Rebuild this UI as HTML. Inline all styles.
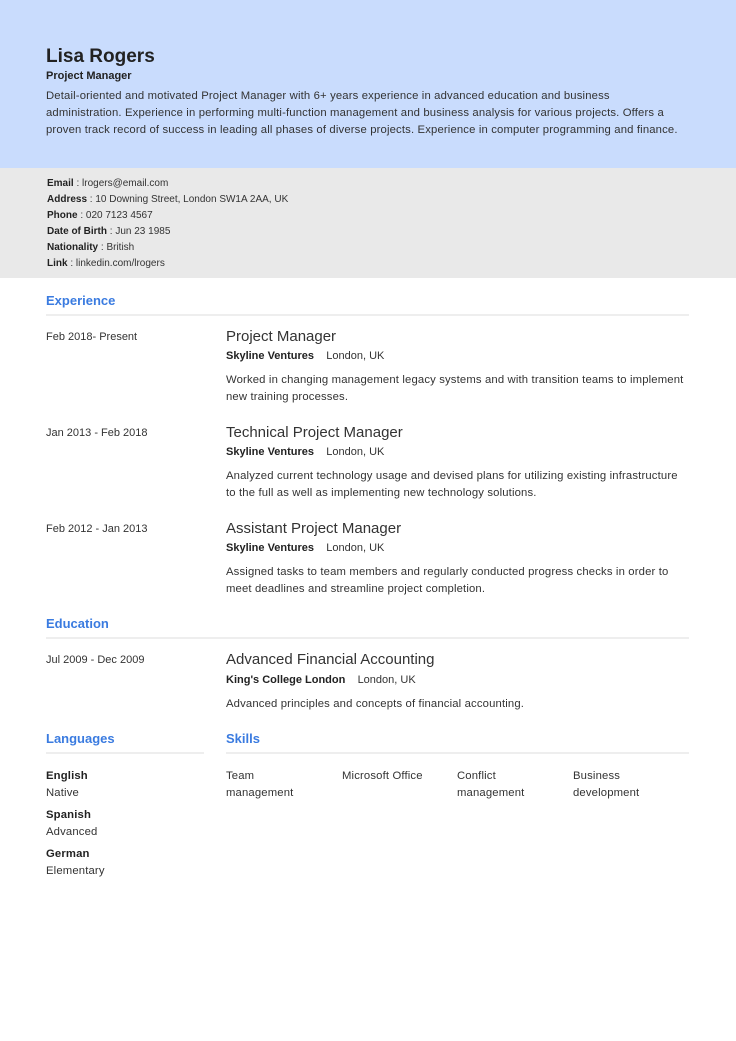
<!DOCTYPE html><html><head><style>
body{margin:0;width:736px;height:1041px;background:#fff;font-family:"Liberation Sans",sans-serif;color:#333;position:relative;overflow:hidden}
.a{position:absolute;white-space:nowrap}
.hd{position:absolute;left:0;top:0;width:736px;height:168px;background:#c9dcfd}
.gr{position:absolute;left:0;top:168px;width:736px;height:110px;background:#e9e9e9}
.sec{position:absolute;color:#3a7be0;font-weight:bold;font-size:13px}
.ln{position:absolute;height:2px;background:#eeeeee}
.d{font-size:11px;color:#333}
.t{font-size:15px;color:#333}
.c{font-size:11px}
.c b{color:#222}
.p{font-size:11.3px;line-height:17px;letter-spacing:0.15px}
.ct{font-size:10px;line-height:16px;color:#333}
.ct b{color:#222}
</style></head><body>
<div class="hd"></div><div class="gr"></div>
<div class="a" style="left:46px;top:46px;font-size:19px;font-weight:bold;color:#222">Lisa Rogers</div>
<div class="a" style="left:46px;top:70px;font-size:11px;font-weight:bold;color:#222">Project Manager</div>
<div class="a p" style="left:46px;top:88px;color:#333">Detail-oriented and motivated Project Manager with 6+ years experience in advanced education and business<br>administration. Experience in performing multi-function management and business analysis for various projects. Offers a<br>proven track record of success in leading all phases of diverse projects. Experience in computer programming and finance.</div>
<div class="a ct" style="left:47px;top:176px"><b>Email</b> : lrogers@email.com<br><b>Address</b> : 10 Downing Street, London SW1A 2AA, UK<br><b>Phone</b> : 020 7123 4567<br><b>Date of Birth</b> : Jun 23 1985<br><b>Nationality</b> : British<br><b>Link</b> : linkedin.com/lrogers</div>

<div class="sec" style="left:46px;top:293px">Experience</div><div class="ln" style="left:46px;top:314px;width:643px"></div>

<div class="a d" style="left:46px;top:331px">Feb 2018- Present</div>
<div class="a t" style="left:226px;top:328px">Project Manager</div>
<div class="a c" style="left:226px;top:350px"><b>Skyline Ventures</b>&nbsp;&nbsp;&nbsp; London, UK</div>
<div class="a p" style="left:226px;top:372px">Worked in changing management legacy systems and with transition teams to implement<br>new training processes.</div>

<div class="a d" style="left:46px;top:427px">Jan 2013 - Feb 2018</div>
<div class="a t" style="left:226px;top:424px">Technical Project Manager</div>
<div class="a c" style="left:226px;top:446px"><b>Skyline Ventures</b>&nbsp;&nbsp;&nbsp; London, UK</div>
<div class="a p" style="left:226px;top:468px">Analyzed current technology usage and devised plans for utilizing existing infrastructure<br>to the full as well as implementing new technology solutions.</div>

<div class="a d" style="left:46px;top:523px">Feb 2012 - Jan 2013</div>
<div class="a t" style="left:226px;top:520px">Assistant Project Manager</div>
<div class="a c" style="left:226px;top:542px"><b>Skyline Ventures</b>&nbsp;&nbsp;&nbsp; London, UK</div>
<div class="a p" style="left:226px;top:564px">Assigned tasks to team members and regularly conducted progress checks in order to<br>meet deadlines and streamline project completion.</div>

<div class="sec" style="left:46px;top:616px">Education</div><div class="ln" style="left:46px;top:637px;width:643px"></div>
<div class="a d" style="left:46px;top:654px">Jul 2009 - Dec 2009</div>
<div class="a t" style="left:226px;top:651px">Advanced Financial Accounting</div>
<div class="a c" style="left:226px;top:674px"><b>King's College London</b>&nbsp;&nbsp;&nbsp; London, UK</div>
<div class="a p" style="left:226px;top:696px">Advanced principles and concepts of financial accounting.</div>

<div class="sec" style="left:46px;top:731px">Languages</div><div class="ln" style="left:46px;top:752px;width:158px"></div>
<div class="sec" style="left:226px;top:731px">Skills</div><div class="ln" style="left:226px;top:752px;width:463px"></div>
<div class="a p" style="left:46px;top:768px"><b style="color:#222">English</b><br>Native</div>
<div class="a p" style="left:46px;top:807px"><b style="color:#222">Spanish</b><br>Advanced</div>
<div class="a p" style="left:46px;top:846px"><b style="color:#222">German</b><br>Elementary</div>
<div class="a p" style="left:226px;top:768px">Team<br>management</div>
<div class="a p" style="left:342px;top:768px">Microsoft Office</div>
<div class="a p" style="left:457px;top:768px">Conflict<br>management</div>
<div class="a p" style="left:573px;top:768px">Business<br>development</div>
</body></html>
